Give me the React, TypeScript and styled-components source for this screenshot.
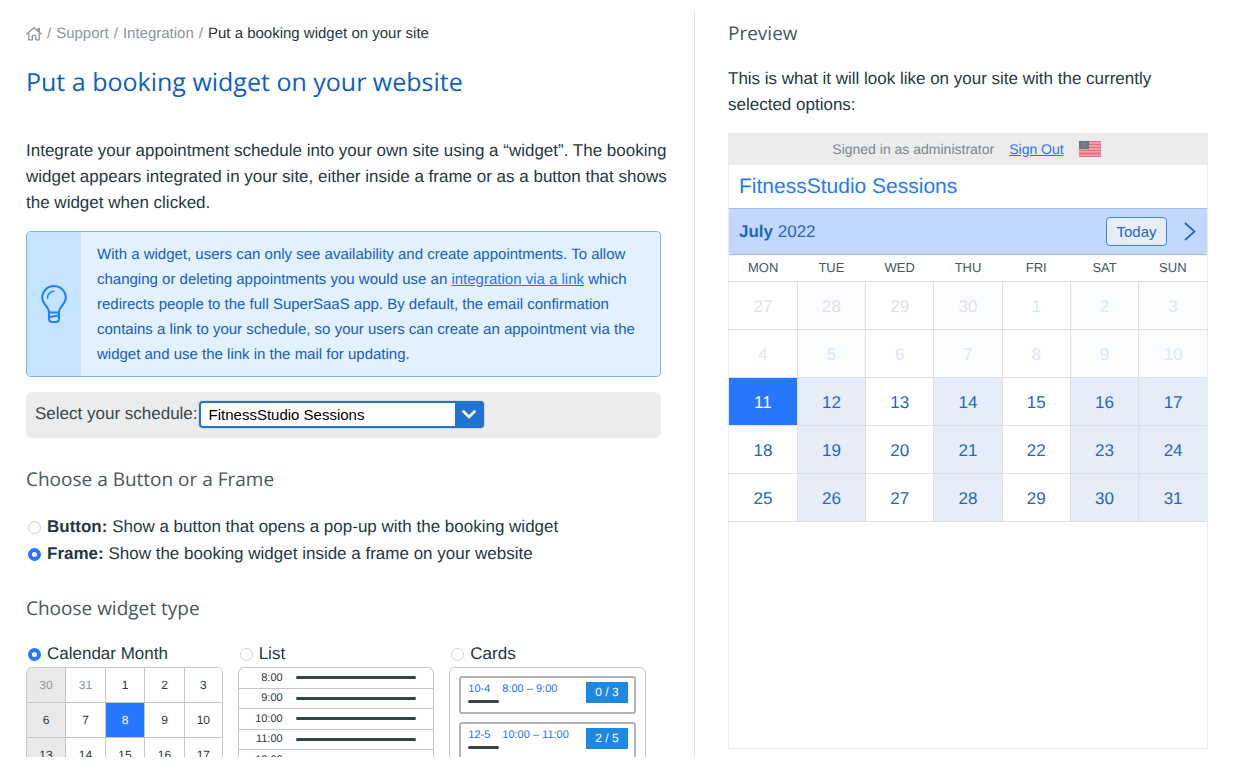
import React from "react";
import styled, { createGlobalStyle, css } from "styled-components";

const sans = `"Liberation Sans", Helvetica, Arial, sans-serif`;
const display = `"Open Sans", "Noto Sans", sans-serif`;

const GlobalStyle = createGlobalStyle`
  *, *::before, *::after { box-sizing: border-box; }
  body {
    margin: 0;
    background: #fff;
    color: #263840;
    font-family: ${sans};
    font-size: 17px;
    line-height: 26px;
    text-rendering: geometricPrecision;
  }
`;

const Page = styled.div`
  display: grid;
  grid-template-columns: 669fr 513fr;
  grid-template-rows: minmax(0, 1fr);
  height: 100vh;
  padding: 11px 26px 22px;
  overflow: hidden;
`;

const Main = styled.main`
  min-width: 0;
  overflow: hidden;
  padding: 12px 33px 0 0;
  border-right: 1px solid #e0e2e4;
`;

const Breadcrumbs = styled.nav`
  display: flex;
  align-items: center;
  gap: 5px;
  font-size: 15px;
  line-height: 22px;
  color: #8c979c;
`;

const Crumb = styled.a`
  display: flex;
  color: #8c979c;
  text-decoration: none;
`;

const CurrentCrumb = styled.span`
  color: #263840;
`;

const Title = styled.h1`
  margin: 19px 0 0;
  font: 400 25px/36px ${display};
  color: #0f5fc2;
`;

const Intro = styled.p`
  margin: 38px -12px 15px 0;
`;

const Note = styled.aside`
  display: flex;
  border: 1px solid #7ab5f8;
  border-radius: 4px;
  background: #e3f1fd;
  color: #1260bd;
  font-size: 15px;
  line-height: 25px;
  overflow: hidden;
`;

const NoteIcon = styled.div`
  display: flex;
  flex: none;
  align-items: center;
  justify-content: center;
  width: 54px;
  background: #c5e4ff;
`;

const NoteText = styled.p`
  margin: 0;
  padding: 10px 16px 9px;
`;

const Link = styled.a`
  color: #1f75fe;
  text-decoration: underline;
`;

const SchedulePicker = styled.div`
  display: flex;
  align-items: center;
  gap: 1px;
  height: 46px;
  margin-top: 15px;
  padding: 0 9px 2px;
  border-radius: 6px;
  background: #ececec;
  color: #37474f;
`;

const SelectBox = styled.div`
  position: relative;
  width: 285px;
`;

const Select = styled.select`
  display: block;
  appearance: none;
  width: 100%;
  height: 27px;
  margin: 0;
  padding: 0 36px 0 8px;
  border: 2px solid #2074d0;
  border-radius: 4px;
  background: #fff;
  color: #000;
  font: 15px ${sans};
  box-shadow: 0 0 2px rgba(32, 80, 140, 0.4);
`;

const SelectArrow = styled.span`
  position: absolute;
  inset: 0 0 0 auto;
  display: flex;
  align-items: center;
  justify-content: center;
  width: 29px;
  border-radius: 0 4px 4px 0;
  background: #2074d0;
  pointer-events: none;
`;

const Heading = styled.h2`
  margin: 0;
  font: 500 19px/26px ${display};
  color: #455860;
`;

const Section = styled.section`
  margin-top: 28px;
`;

const Choices = styled.div`
  margin-top: 21px;
`;

const TypeGrid = styled.div`
  display: grid;
  grid-template-columns: repeat(3, 1fr);
  margin-top: 19px;
`;

const TypeColumn = styled.div`
  padding-right: 15px;
`;

const Choice = styled.label`
  display: flex;
  align-items: center;
  gap: 6px;
  line-height: 27px;
`;

const Radio = styled.input`
  appearance: none;
  flex: none;
  width: 13px;
  height: 13px;
  margin: 2px 0 0 2px;
  border: 1px solid #ced1d3;
  border-radius: 50%;
  background: #fff;
  &:checked {
    border: 4px solid #2578ff;
  }
`;

const thumb = css`
  border: 1px solid #c4c8ca;
  border-radius: 6px;
  overflow: hidden;
`;

const MonthThumb = styled.div`
  ${thumb}
  display: grid;
  grid-template-columns: 39px 40px 39px 40px 1fr;
  grid-auto-rows: 35px;
  font-size: 12px;
`;

const MonthCell = styled.span<{ $tone?: "muted" | "active"; $shaded?: boolean; $last?: boolean }>`
  display: flex;
  align-items: center;
  justify-content: center;
  border-bottom: 1px solid #c4c8ca;
  border-right: ${(p) => (p.$last ? "0" : "1px solid #c4c8ca")};
  background: ${(p) => (p.$tone === "active" ? "#2578ff" : p.$shaded ? "#e9e9e9" : "#fff")};
  color: ${(p) => (p.$tone === "active" ? "#fff" : p.$tone === "muted" ? "#8c979c" : "#263840")};
  font-weight: 500;
`;

const ListThumb = styled.div`
  ${thumb}
  display: grid;
  grid-template-rows: repeat(6, 1fr);
  height: 125px;
`;

const ListRow = styled.div`
  display: grid;
  grid-template-columns: 44px 1fr;
  align-items: center;
  gap: 13px;
  padding-right: 17px;
  border-bottom: 1px solid #c4c8ca;
  font-size: 11px;
  line-height: 12px;
  text-align: right;
`;

const Bar = styled.span<{ $short?: boolean }>`
  display: block;
  width: ${(p) => (p.$short ? "31px" : "100%")};
  height: 3px;
  border-radius: 2px;
  background: #34454d;
`;

const CardsThumb = styled.div`
  ${thumb}
  display: flex;
  flex-direction: column;
  gap: 8px;
  padding: 8px 9px;
`;

const Card = styled.div`
  display: flex;
  justify-content: space-between;
  height: 38px;
  padding: 4px 6px 0 7px;
  border: 2px solid #aeb5b9;
  border-radius: 3px;
`;

const CardText = styled.div`
  display: grid;
  grid-template-columns: 34px auto;
  align-content: start;
  row-gap: 4px;
  color: #1f70f0;
  font-size: 11px;
  line-height: 14px;
  white-space: nowrap;
`;

const Badge = styled.span`
  width: 42px;
  height: 21px;
  background: #1e88e5;
  color: #fff;
  font-size: 12px;
  line-height: 21px;
  text-align: center;
`;

const Side = styled.aside`
  display: flex;
  flex-direction: column;
  min-width: 0;
  padding: 9px 0 8px 33px;
`;

const SideText = styled.p`
  margin: 20px 0 15px;
`;

const Frame = styled.div`
  flex: 1;
  min-height: 0;
  border: 1px solid #ececec;
`;

const UserBar = styled.div`
  display: flex;
  align-items: center;
  justify-content: center;
  gap: 15px;
  height: 31px;
  padding: 0 3px 2px 0;
  background: #ececec;
  color: #7b878c;
  font-size: 14px;
`;

const ScheduleName = styled.h3`
  margin: 0;
  padding: 0 10px;
  color: #2578ff;
  font: 400 21px/43px ${sans};
`;

const MonthBar = styled.div`
  display: flex;
  align-items: center;
  height: 47px;
  padding: 0 11px 0 10px;
  border: solid #9cc0f0;
  border-width: 1px 0;
  background: #c3d8ff;
  color: #2268b8;
`;

const MonthLabel = styled.span`
  flex: 1;
`;

const TodayButton = styled.button`
  width: 61px;
  height: 29px;
  margin-right: 17px;
  padding: 0;
  border: 1px solid #3f86d4;
  border-radius: 4px;
  background: #e6edf8;
  color: #2268b8;
  font: 15px ${sans};
`;

const NextButton = styled.button`
  display: flex;
  padding: 0;
  border: 0;
  background: none;
  color: #2268b8;
`;

const Month = styled.table`
  width: 100%;
  border-collapse: collapse;
  table-layout: fixed;
  text-align: center;
`;

const Weekday = styled.th`
  height: 26px;
  padding: 0;
  border-bottom: 1px solid #dddfe1;
  color: #455860;
  font-size: 13px;
  font-weight: 400;
`;

const Day = styled.td<{ $shaded: boolean; $state: "other" | "past" | "today" | "open" }>`
  height: 48px;
  padding: 2px 0 0;
  border: solid #dddfe1;
  border-width: 0 1px 1px 0;
  &:last-child {
    border-right: 0;
  }
  background: ${(p) =>
    p.$state === "today"
      ? "#2578ff"
      : !p.$shaded
      ? "#fff"
      : p.$state === "open"
      ? "#e7edf8"
      : "#fbfcfe"};
  color: ${(p) =>
    ({ other: "#dfe2e6", past: "#dae7f8", today: "#fff", open: "#2268b8" }[p.$state])};
`;

const DayLink = styled.a`
  color: inherit;
  text-decoration: none;
`;

const HomeIcon = () => (
  <svg width="16" height="15" viewBox="0 0 16 15" fill="none" stroke="#8c979c" strokeWidth="1.3" strokeLinejoin="round" strokeLinecap="round" aria-label="Home">
    <path d="M.8 7 8 .8 15.2 7M12.1 4V1.600h1.3V5.200" />
    <path d="M2.800 6.300V12.800H6.300V9.400Q6.300 8.400 7.200 8.400H8.800Q9.700 8.400 9.700 9.400V12.800H13.200V6.300" />
  </svg>
);

const BulbIcon = () => (
  <svg width="26" height="38" viewBox="0 0 26 38" fill="none" stroke="#1f80f5" strokeWidth="2" strokeLinecap="round" strokeLinejoin="round" aria-hidden="true">
    <path d="M8 27.500C8 21 1.200 19.500 1.200 12.800A11.800 11.800 0 0 1 24.800 12.800C24.800 19.500 18 21 18 27.500Z" />
    <path d="M6.500 13A6.500 6.500 0 0 1 13 6.200" strokeWidth="1.600" />
    <path d="M8 27.500V33.500Q8 37 11.500 37H14.500Q18 37 18 33.500V27.500M8.500 32 17.500 30.500" />
  </svg>
);

const Chevron = () => (
  <svg width="14" height="9" viewBox="0 0 14 9" fill="none" stroke="#fff" strokeWidth="2.600" strokeLinecap="round" aria-hidden="true">
    <path d="M1.500 1.500 7 7 12.500 1.500" />
  </svg>
);

const Next = () => (
  <svg width="12" height="19" viewBox="0 0 12 19" fill="none" stroke="currentColor" strokeWidth="1.800" aria-hidden="true">
    <path d="M1 1 10.500 9.500 1 18" />
  </svg>
);

const Flag = () => (
  <svg width="22" height="16" viewBox="0 0 22 16" role="img" aria-label="English (US)">
    <rect width="22" height="16" fill="#f0dfe2" />
    <rect width="22" height="8" fill="#e9a0aa" />
    {[0, 3, 6, 9, 12, 15].map((y) => (
      <rect key={y} y={y} width="22" height="1" fill="#e0707f" />
    ))}
    {[8, 10, 11, 13, 14].map((y) => (
      <rect key={y} y={y} width="22" height="1" fill={y % 2 ? "#e68a96" : "#e7a3ac"} />
    ))}
    <rect width="10" height="8" fill="#66757f" />
    <path d="M2 2.500H8M2 4H8M2 5.500H8" stroke="#8f9ca3" strokeWidth=".8" strokeDasharray="1 1" />
  </svg>
);

const weekdays = ["MON", "TUE", "WED", "THU", "FRI", "SAT", "SUN"];
const shadedDays = [1, 3, 5, 6];
const weeks = [
  [27, 28, 29, 30, 1, 2, 3],
  [4, 5, 6, 7, 8, 9, 10],
  [11, 12, 13, 14, 15, 16, 17],
  [18, 19, 20, 21, 22, 23, 24],
  [25, 26, 27, 28, 29, 30, 31],
];
const thumbDays = [30, 31, 1, 2, 3, 6, 7, 8, 9, 10, 13, 14, 15, 16, 17];
const thumbTimes = ["8:00", "9:00", "10:00", "11:00", "12:00", "13:00"];
const thumbCards = [
  { date: "10-4", time: "8:00 – 9:00", seats: "0 / 3" },
  { date: "12-5", time: "10:00 – 11:00", seats: "2 / 5" },
];

function dayState(week: number, day: number) {
  if (week === 0 && day > 20) return "other";
  if (day < 11 && week < 2) return "past";
  return day === 11 ? "today" : "open";
}

export default function App() {
  return (
    <>
      <GlobalStyle />
      <Page>
        <Main>
          <Breadcrumbs aria-label="Breadcrumb">
            <Crumb href="#home"><HomeIcon /></Crumb>
            <span>/</span>
            <Crumb href="#support">Support</Crumb>
            <span>/</span>
            <Crumb href="#integration">Integration</Crumb>
            <span>/</span>
            <CurrentCrumb aria-current="page">Put a booking widget on your site</CurrentCrumb>
          </Breadcrumbs>
          <Title>Put a booking widget on your website</Title>
          <Intro>
            Integrate your appointment schedule into your own site using a “widget”. The booking
            widget appears integrated in your site, either inside a frame or as a button that shows
            the widget when clicked.
          </Intro>
          <Note>
            <NoteIcon><BulbIcon /></NoteIcon>
            <NoteText>
              With a widget, users can only see availability and create appointments. To allow
              changing or deleting appointments you would use an{" "}
              <Link href="#link">integration via a link</Link> which redirects people to the full
              SuperSaaS app. By default, the email confirmation contains a link to your schedule,
              so your users can create an appointment via the widget and use the link in the mail
              for updating.
            </NoteText>
          </Note>
          <SchedulePicker>
            <label htmlFor="schedule">Select your schedule:</label>
            <SelectBox>
              <Select id="schedule" defaultValue="fitness">
                <option value="fitness">FitnessStudio Sessions</option>
              </Select>
              <SelectArrow><Chevron /></SelectArrow>
            </SelectBox>
          </SchedulePicker>

          <Section>
            <Heading>Choose a Button or a Frame</Heading>
            <Choices>
              <Choice>
                <Radio type="radio" name="display" value="button" />
                <span><b>Button:</b> Show a button that opens a pop-up with the booking widget</span>
              </Choice>
              <Choice>
                <Radio type="radio" name="display" value="frame" defaultChecked />
                <span><b>Frame:</b> Show the booking widget inside a frame on your website</span>
              </Choice>
            </Choices>
          </Section>

          <Section>
            <Heading>Choose widget type</Heading>
            <TypeGrid>
              <TypeColumn>
                <Choice>
                  <Radio type="radio" name="type" value="month" defaultChecked />
                  Calendar Month
                </Choice>
                <MonthThumb>
                  {thumbDays.map((day, i) => (
                    <MonthCell
                      key={day}
                      $shaded={i % 5 === 0}
                      $last={i % 5 === 4}
                      $tone={i < 2 ? "muted" : day === 8 ? "active" : undefined}
                    >
                      {day}
                    </MonthCell>
                  ))}
                </MonthThumb>
              </TypeColumn>
              <TypeColumn>
                <Choice>
                  <Radio type="radio" name="type" value="list" />
                  List
                </Choice>
                <ListThumb>
                  {thumbTimes.map((time) => (
                    <ListRow key={time}>
                      {time}
                      <Bar />
                    </ListRow>
                  ))}
                </ListThumb>
              </TypeColumn>
              <TypeColumn>
                <Choice>
                  <Radio type="radio" name="type" value="cards" />
                  Cards
                </Choice>
                <CardsThumb>
                  {thumbCards.map((card) => (
                    <Card key={card.date}>
                      <CardText>
                        <span>{card.date}</span>
                        <span>{card.time}</span>
                        <Bar $short />
                      </CardText>
                      <Badge>{card.seats}</Badge>
                    </Card>
                  ))}
                </CardsThumb>
              </TypeColumn>
            </TypeGrid>
          </Section>
        </Main>

        <Side>
          <Heading>Preview</Heading>
          <SideText>This is what it will look like on your site with the currently selected options:</SideText>
          <Frame>
            <UserBar>
              <span>Signed in as administrator</span>
              <Link href="#signout">Sign Out</Link>
              <Flag />
            </UserBar>
            <ScheduleName>FitnessStudio Sessions</ScheduleName>
            <MonthBar>
              <MonthLabel><b>July</b> 2022</MonthLabel>
              <TodayButton type="button">Today</TodayButton>
              <NextButton type="button" aria-label="Next month"><Next /></NextButton>
            </MonthBar>
            <Month>
              <thead>
                <tr>
                  {weekdays.map((name) => (
                    <Weekday key={name} scope="col">{name}</Weekday>
                  ))}
                </tr>
              </thead>
              <tbody>
                {weeks.map((days, week) => (
                  <tr key={week}>
                    {days.map((day, i) => {
                      const state = dayState(week, day);
                      const active = state === "today" || state === "open";
                      return (
                        <Day key={day} $shaded={shadedDays.includes(i)} $state={state}>
                          {active ? <DayLink href={`#day-${day}`}>{day}</DayLink> : day}
                        </Day>
                      );
                    })}
                  </tr>
                ))}
              </tbody>
            </Month>
          </Frame>
        </Side>
      </Page>
    </>
  );
}
